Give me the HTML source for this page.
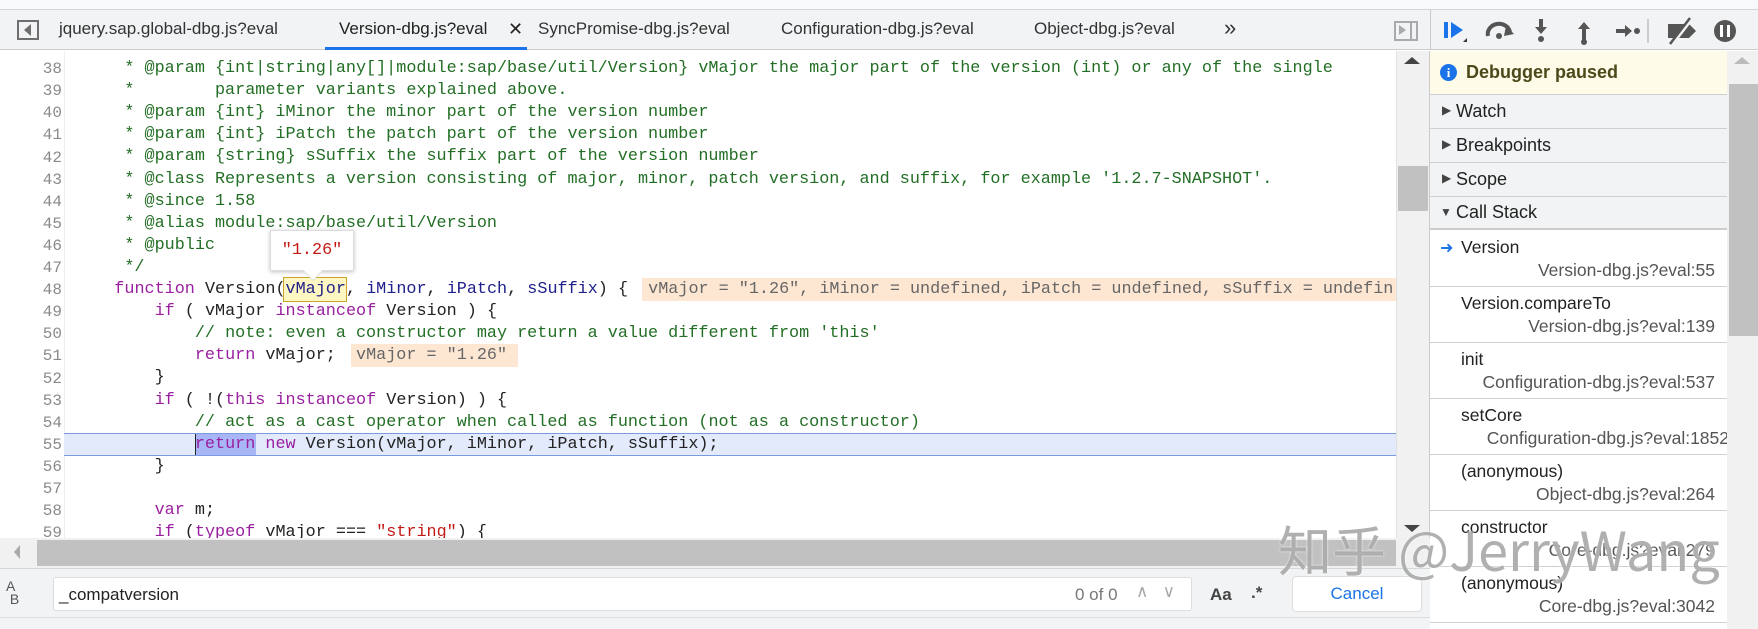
<!DOCTYPE html>
<html><head><meta charset="utf-8"><style>
*{margin:0;padding:0;box-sizing:border-box}
body{width:1758px;height:629px;overflow:hidden;background:#fff;font-family:"Liberation Sans",sans-serif;position:relative}
.a{position:absolute}
.code{font-family:"Liberation Mono",monospace;font-size:16.8px;white-space:pre;line-height:22px}
.ln{position:absolute;left:0;width:62px;text-align:right;color:#8a8a8a;font-family:"Liberation Mono",monospace;font-size:16px;line-height:22px}
.c{color:#236e25}.k{color:#9a1fa0}.s{color:#c41a16}.v{color:#20208a}
.tab{position:absolute;top:19px;font-size:17px;color:#333}
.sb{position:absolute;left:1430px;width:297px;border-bottom:1px solid #cfcfcf;background:#f1f3f4;font-size:18px;color:#222}
.st{position:absolute;left:1430px;width:297px;height:56px;border-bottom:1px solid #d0d0d0;background:#fff;font-size:17.5px}
.st .f{position:absolute;left:31px;top:6px;color:#222}
.st .l{position:absolute;right:12px;top:29px;color:#555}
</style></head><body>
<div class="a" style="left:0;top:0;width:1758px;height:10px;background:#f8f9fa;border-bottom:1px solid #d6d6d6"></div>
<div class="a" style="left:0;top:10px;width:1430px;height:40px;background:#f1f3f4;border-bottom:1px solid #cbcbcb"></div>
<div class="a" style="left:17px;top:20px;width:22px;height:20px;border:2px solid #6e6e6e"></div>
<div class="a" style="left:24px;top:24px;width:0;height:0;border-top:6px solid transparent;border-bottom:6px solid transparent;border-right:7px solid #6e6e6e"></div>
<div class="tab" style="left:59px">jquery.sap.global-dbg.js?eval</div>
<div class="tab" style="left:339px;color:#222">Version-dbg.js?eval</div>
<div class="tab" style="left:508px;font-size:18px;color:#222">✕</div>
<div class="a" style="left:325px;top:47px;width:202px;height:3px;background:#1a73e8"></div>
<div class="tab" style="left:538px">SyncPromise-dbg.js?eval</div>
<div class="tab" style="left:781px">Configuration-dbg.js?eval</div>
<div class="tab" style="left:1034px">Object-dbg.js?eval</div>
<div class="tab" style="left:1224px;font-size:22px;top:15px">»</div>
<div class="a" style="left:1394px;top:21px;width:24px;height:20px;border:2px solid #aaa"></div>
<div class="a" style="left:1399px;top:25px;width:0;height:0;border-top:5px solid transparent;border-bottom:5px solid transparent;border-left:7px solid #aaa"></div>
<div class="a" style="left:1410px;top:21px;width:2px;height:20px;background:#aaa"></div>
<div class="a" style="left:1430px;top:10px;width:328px;height:40px;background:#f1f3f4;border-bottom:1px solid #cbcbcb;border-left:1px solid #cbcbcb"></div>
<svg class="a" style="left:1440px;top:14px" width="318" height="34">
<rect x="4" y="8" width="4" height="16" fill="#1a73e8"/><path d="M11 8 L23 16 L11 24Z" fill="#1a73e8"/><path d="M23 28 L27 24 L27 28Z" fill="#333"/>
<path d="M48 22 A11 10 0 0 1 70 18" stroke="#555" stroke-width="4" fill="none"/><path d="M66 12 L74 20 L64 22Z" fill="#555"/><circle cx="59" cy="22" r="3" fill="#555"/>
<path d="M101 5 V16" stroke="#555" stroke-width="4"/><path d="M95 13 L101 20 L107 13Z" fill="#555"/><circle cx="101" cy="25" r="3" fill="#555"/>
<path d="M144 26 V14" stroke="#555" stroke-width="4"/><path d="M138 15 L144 8 L150 15Z" fill="#555"/><circle cx="144" cy="28" r="3" fill="#555"/>
<path d="M176 17 H186" stroke="#555" stroke-width="4"/><path d="M185 11 L192 17 L185 23Z" fill="#555"/><circle cx="197" cy="17" r="3" fill="#555"/>
<rect x="207" y="5" width="2" height="24" fill="#ccc"/>
<path d="M228 10 H249 L256 17 L249 24 H228Z" fill="#555"/><path d="M232 30 L252 4" stroke="#f1f3f4" stroke-width="4"/><path d="M230 30 L250 4" stroke="#555" stroke-width="2.5"/>
<circle cx="285" cy="17" r="11" fill="#555"/><rect x="280" y="11" width="3" height="12" fill="#fff"/><rect x="287" y="11" width="3" height="12" fill="#fff"/>
</svg>
<div class="a" style="left:0;top:51px;width:1396px;height:487px;overflow:hidden;background:#fff">
<div class="a" style="left:64px;top:0;width:1px;height:487px;background:#eee"></div>
<div class="a" style="left:64px;top:382px;width:1332px;height:23px;background:#e3eafc;border-top:1px solid #7b9be0;border-bottom:1px solid #7b9be0"></div>
<div class="a" style="left:195px;top:383px;width:61px;height:21px;background:#a9b6f5"></div>
<div class="a" style="left:195px;top:383px;width:1px;height:21px;background:#222"></div>
<div class="a" style="left:642px;top:227px;width:754px;height:23px;background:#fde6d2"></div>
<div class="a" style="left:351px;top:293px;width:167px;height:23px;background:#fde6d2"></div>
<div class="a" style="left:283px;top:226px;width:64px;height:25px;background:#fff7c2;border:1px solid #c9a32a"></div>
<div class="a" style="left:0;top:-15px;width:1396px">
<div class="ln" style="top:0">37</div><div class="ln" style="top:22.1px">38</div><div class="ln" style="top:44.2px">39</div><div class="ln" style="top:66.3px">40</div><div class="ln" style="top:88.4px">41</div><div class="ln" style="top:110.5px">42</div><div class="ln" style="top:132.6px">43</div><div class="ln" style="top:154.7px">44</div><div class="ln" style="top:176.8px">45</div><div class="ln" style="top:198.9px">46</div><div class="ln" style="top:221px">47</div><div class="ln" style="top:243.1px">48</div><div class="ln" style="top:265.2px">49</div><div class="ln" style="top:287.3px">50</div><div class="ln" style="top:309.4px">51</div><div class="ln" style="top:331.5px">52</div><div class="ln" style="top:353.6px">53</div><div class="ln" style="top:375.7px">54</div><div class="ln" style="top:397.8px">55</div><div class="ln" style="top:419.9px">56</div><div class="ln" style="top:442px">57</div><div class="ln" style="top:464.1px">58</div><div class="ln" style="top:486.2px">59</div>
<div class="a code" style="left:74px;top:0;line-height:22.1px;color:#222"><span class="c">     */</span>
<span class="c">     * @param {int|string|any[]|module:sap/base/util/Version} vMajor the major part of the version (int) or any of the single</span>
<span class="c">     *        parameter variants explained above.</span>
<span class="c">     * @param {int} iMinor the minor part of the version number</span>
<span class="c">     * @param {int} iPatch the patch part of the version number</span>
<span class="c">     * @param {string} sSuffix the suffix part of the version number</span>
<span class="c">     * @class Represents a version consisting of major, minor, patch version, and suffix, for example '1.2.7-SNAPSHOT'.</span>
<span class="c">     * @since 1.58</span>
<span class="c">     * @alias module:sap/base/util/Version</span>
<span class="c">     * @public</span>
<span class="c">     */</span>
    <span class="k">function</span> Version(<span class="v">vMajor</span>, <span class="v">iMinor</span>, <span class="v">iPatch</span>, <span class="v">sSuffix</span>) {  <span style="color:#666">vMajor = "1.26", iMinor = undefined, iPatch = undefined, sSuffix = undefin</span>
        <span class="k">if</span> ( vMajor <span class="k">instanceof</span> Version ) {
            <span class="c">// note: even a constructor may return a value different from 'this'</span>
            <span class="k">return</span> vMajor;  <span style="color:#666">vMajor = "1.26"</span>
        }
        <span class="k">if</span> ( !(<span class="k">this</span> <span class="k">instanceof</span> Version) ) {
            <span class="c">// act as a cast operator when called as function (not as a constructor)</span>
            <span class="k">return</span> <span class="k">new</span> Version(vMajor, iMinor, iPatch, sSuffix);
        }

        <span class="k">var</span> m;
        <span class="k">if</span> (<span class="k">typeof</span> vMajor === <span class="s">"string"</span>) {</div>
</div>
<div class="a" style="left:270px;top:179px;width:84px;height:41px;background:#fff;border:1px solid #ddd;box-shadow:0 1px 4px rgba(0,0,0,.25);font-family:'Liberation Mono',monospace;font-size:16.8px;color:#c41a16;text-align:center;line-height:39px">"1.26"</div>
<div class="a" style="left:306px;top:213px;width:14px;height:14px;background:#fff;transform:rotate(45deg);border-right:1px solid #ddd;border-bottom:1px solid #ddd"></div>
</div>
<div class="a" style="left:1396px;top:51px;width:34px;height:487px;background:#f1f1f1;border-left:1px solid #e0e0e0"></div>
<div class="a" style="left:1404px;top:57px;border-left:8px solid transparent;border-right:8px solid transparent;border-bottom:7px solid #444"></div>
<div class="a" style="left:1398px;top:166px;width:30px;height:45px;background:#c1c1c1"></div>
<div class="a" style="left:1404px;top:525px;border-left:8px solid transparent;border-right:8px solid transparent;border-top:7px solid #444"></div>
<div class="a" style="left:1429px;top:51px;width:1px;height:578px;background:#cbcbcb"></div>
<div class="a" style="left:0;top:538px;width:1430px;height:30px;background:#f1f1f1"></div>
<div class="a" style="left:37px;top:540px;width:1359px;height:26px;background:#c1c1c1"></div>
<div class="a" style="left:14px;top:545px;border-top:7px solid transparent;border-bottom:7px solid transparent;border-right:6px solid #aaa"></div>
<div class="a" style="left:0;top:568px;width:1430px;height:61px;background:#f1f3f4;border-top:1px solid #d6d6d6"></div>
<div class="a" style="left:6px;top:580px;font-size:14px;color:#555;line-height:13px">A<br>&nbsp;B</div>
<div class="a" style="left:53px;top:577px;width:1139px;height:34px;background:#fff;border:1px solid #ddd;border-radius:3px"></div>
<div class="a" style="left:59px;top:585px;font-size:17px;color:#222">_compatversion</div>
<div class="a" style="left:1075px;top:585px;font-size:17px;color:#777">0 of 0</div>
<div class="a" style="left:1136px;top:582px;font-size:17px;color:#aaa">&#8743;&nbsp;&nbsp;&nbsp;&#8744;</div>
<div class="a" style="left:1210px;top:585px;font-size:17px;color:#444;font-weight:bold">Aa</div>
<div class="a" style="left:1251px;top:583px;font-size:17px;color:#444;font-weight:bold">.*</div>
<div class="a" style="left:1292px;top:576px;width:130px;height:36px;background:#fff;border:1px solid #ddd;border-radius:4px;color:#1a73e8;font-size:17px;text-align:center;line-height:34px">Cancel</div>
<div class="a" style="left:0;top:617px;width:1430px;height:12px;background:#f1f3f4;border-top:1px solid #ddd"></div>
<div class="a" style="left:1430px;top:51px;width:297px;height:578px;background:#fff"></div>
<div class="sb" style="top:51px;height:44px;background:#fefce8;"><span class="a" style="left:10px;top:13px;width:17px;height:17px;border-radius:50%;background:#1a73e8;color:#fff;font-size:13px;text-align:center;line-height:17px;font-weight:bold;font-family:'Liberation Serif',serif">i</span><span class="a" style="left:36px;top:11px;font-weight:bold;color:#4a4a1a;font-size:18px">Debugger paused</span></div>
<div class="sb" style="top:95px;height:34px"><span class="a" style="left:12px;top:8px;font-size:12px;color:#444">▶</span><span class="a" style="left:26px;top:6px">Watch</span></div>
<div class="sb" style="top:129px;height:34px"><span class="a" style="left:12px;top:8px;font-size:12px;color:#444">▶</span><span class="a" style="left:26px;top:6px">Breakpoints</span></div>
<div class="sb" style="top:163px;height:34px"><span class="a" style="left:12px;top:8px;font-size:12px;color:#444">▶</span><span class="a" style="left:26px;top:6px">Scope</span></div>
<div class="sb" style="top:197px;height:33px;border-bottom:2px solid #ccc"><span class="a" style="left:10px;top:8px;font-size:12px;color:#444">▼</span><span class="a" style="left:26px;top:5px">Call Stack</span></div>
<div class="st" style="top:231px"><span class="a" style="left:10px;top:7px;color:#1a73e8;font-size:16px">&#10140;</span><span class="f">Version</span><span class="l">Version-dbg.js?eval:55</span></div>
<div class="st" style="top:287px"><span class="f">Version.compareTo</span><span class="l">Version-dbg.js?eval:139</span></div>
<div class="st" style="top:343px"><span class="f">init</span><span class="l">Configuration-dbg.js?eval:537</span></div>
<div class="st" style="top:399px"><span class="f">setCore</span><span class="l" style="right:-2px">Configuration-dbg.js?eval:1852</span></div>
<div class="st" style="top:455px"><span class="f">(anonymous)</span><span class="l">Object-dbg.js?eval:264</span></div>
<div class="st" style="top:511px"><span class="f">constructor</span><span class="l">Core-dbg.js?eval:279</span></div>
<div class="st" style="top:567px"><span class="f">(anonymous)</span><span class="l">Core-dbg.js?eval:3042</span></div>
<div class="a" style="left:1727px;top:51px;width:31px;height:578px;background:#f1f1f1"></div>
<div class="a" style="left:1734px;top:57px;border-left:8px solid transparent;border-right:8px solid transparent;border-bottom:7px solid #bbb"></div>
<div class="a" style="left:1729px;top:84px;width:29px;height:252px;background:#c1c1c1"></div>
<div class="a" style="left:1278px;top:516px;font-family:'Noto Sans CJK SC',sans-serif;font-size:54px;color:rgba(150,150,150,.75);white-space:nowrap;text-shadow:0 0 2px #fff;line-height:64px">知乎 @JerryWang</div>
</body></html>
